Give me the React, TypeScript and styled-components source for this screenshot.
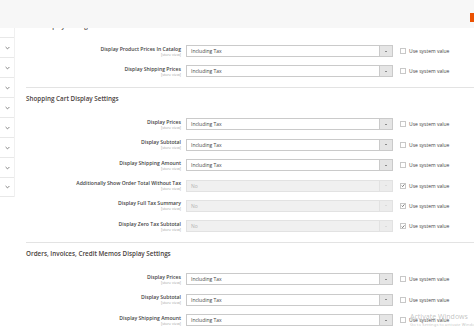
import React from "react";
import styled, { createGlobalStyle } from "styled-components";

type Row = {
  label: string;
  value: string;
  inherit?: boolean;
};

type Section = {
  title: string;
  rows: Row[];
};

const GlobalStyle = createGlobalStyle`
  html, body {
    margin: 0;
    padding: 0;
    background: #fff;
  }
  body {
    width: 474px;
    height: 333px;
    overflow: hidden;
    font-family: "Open Sans", "Liberation Sans", Arial, sans-serif;
    color: #303030;
  }
`;

const Page = styled.div`
  position: relative;
  width: 474px;
  height: 333px;
  overflow: hidden;
  display: flex;
`;

const TopBar = styled.div`
  position: absolute;
  top: 0;
  left: 0;
  right: 0;
  height: 28px;
  background: #f7f7f7;
  z-index: 2;
`;

const SaveButton = styled.div`
  position: absolute;
  top: 13px;
  right: 0;
  width: 4px;
  height: 9px;
  background: #eb5202;
`;

const Sidebar = styled.nav`
  width: 15px;
  flex: none;
  margin-top: 28px;
  padding-top: 9px;
  align-self: flex-start;
  border-right: 1px solid #f0f0f0;
  box-sizing: border-box;
`;

const NavItem = styled.div`
  height: 20px;
  border-top: 1px solid #e8e8e8;
  display: flex;
  align-items: center;
  justify-content: center;
  box-sizing: border-box;
  &:last-child {
    border-bottom: 1px solid #e8e8e8;
  }
`;

const Main = styled.main`
  flex: 1;
  padding: 21px 0 0 11px;
`;

const Block = styled.section<{ $first?: boolean }>`
  border-top: ${(p) => (p.$first ? "none" : "1px solid #e3e3e3")};
  padding-top: ${(p) => (p.$first ? "0" : "6px")};
  margin-bottom: 10px;
`;

const Heading = styled.h3`
  margin: 0 0 14px;
  height: 10px;
  line-height: 10px;
  font-size: 6.3px;
  font-weight: 600;
  color: #4a4240;
  white-space: nowrap;
`;

const Rows = styled.div`
  display: flex;
  flex-direction: column;
  gap: 8.4px;
`;

const FieldRow = styled.div`
  display: flex;
  align-items: center;
  height: 12px;
`;

const LabelBox = styled.div`
  width: 155px;
  flex: none;
  text-align: right;
  margin-right: 5px;
  display: flex;
  flex-direction: column;
  align-items: flex-end;
`;

const LabelText = styled.span`
  font-size: 5.1px;
  font-weight: 600;
  line-height: 7px;
  color: #444;
  white-space: nowrap;
`;

const Scope = styled.span`
  font-size: 3.7px;
  line-height: 4px;
  color: #a3a3a3;
  white-space: nowrap;
`;

const Select = styled.div<{ $disabled?: boolean }>`
  width: 207px;
  height: 12px;
  flex: none;
  box-sizing: border-box;
  display: flex;
  align-items: stretch;
  border: 1px solid ${(p) => (p.$disabled ? "#e2e2e2" : "#cacaca")};
  background: ${(p) => (p.$disabled ? "#f0f0f0" : "#fff")};
`;

const SelectValue = styled.span<{ $disabled?: boolean }>`
  flex: 1;
  padding-left: 4px;
  font-size: 5px;
  line-height: 10px;
  color: ${(p) => (p.$disabled ? "#b5b5b5" : "#444")};
`;

const Arrow = styled.span<{ $disabled?: boolean }>`
  width: 12px;
  flex: none;
  display: flex;
  align-items: center;
  justify-content: center;
  background: ${(p) => (p.$disabled ? "#ececec" : "#e5e5e5")};
  border-left: 1px solid ${(p) => (p.$disabled ? "#e2e2e2" : "#cacaca")};
  &::after {
    content: "";
    border-left: 1.3px solid transparent;
    border-right: 1.3px solid transparent;
    border-top: 1.6px solid ${(p) => (p.$disabled ? "#c8c8c8" : "#333")};
  }
`;

const Inherit = styled.label`
  display: flex;
  align-items: center;
  margin-left: 7px;
  gap: 3px;
  font-size: 5px;
  color: #444;
  white-space: nowrap;
`;

const Box = styled.span`
  width: 6px;
  height: 6px;
  box-sizing: border-box;
  border: 1px solid #c8c8c8;
  background: #fff;
  display: flex;
  align-items: center;
  justify-content: center;
`;

const Watermark = styled.div`
  position: absolute;
  left: 410px;
  top: 312px;
  color: rgba(120, 120, 120, 0.45);
  font-family: "Noto Sans", "Open Sans", sans-serif;
  white-space: nowrap;
  z-index: 3;
`;

const WatermarkTitle = styled.div`
  font-size: 7px;
  line-height: 9px;
`;

const WatermarkSub = styled.div`
  font-size: 4.3px;
  line-height: 6px;
`;

const sections: Section[] = [
  {
    title: "Price Display Settings",
    rows: [
      { label: "Display Product Prices In Catalog", value: "Including Tax" },
      { label: "Display Shipping Prices", value: "Including Tax" },
    ],
  },
  {
    title: "Shopping Cart Display Settings",
    rows: [
      { label: "Display Prices", value: "Including Tax" },
      { label: "Display Subtotal", value: "Including Tax" },
      { label: "Display Shipping Amount", value: "Including Tax" },
      { label: "Additionally Show Order Total Without Tax", value: "No", inherit: true },
      { label: "Display Full Tax Summary", value: "No", inherit: true },
      { label: "Display Zero Tax Subtotal", value: "No", inherit: true },
    ],
  },
  {
    title: "Orders, Invoices, Credit Memos Display Settings",
    rows: [
      { label: "Display Prices", value: "Including Tax" },
      { label: "Display Subtotal", value: "Including Tax" },
      { label: "Display Shipping Amount", value: "Including Tax" },
    ],
  },
];

const Chevron = () => (
  <svg width="5" height="4" viewBox="0 0 5 4">
    <polyline points="0.6,1 2.5,2.9 4.4,1" fill="none" stroke="#666" strokeWidth="0.8" />
  </svg>
);

const Check = () => (
  <svg width="5" height="5" viewBox="0 0 5 5">
    <polyline points="0.8,2.6 2,3.8 4.3,1.1" fill="none" stroke="#333" strokeWidth="0.8" />
  </svg>
);

export default function App(): React.ReactElement {
  return (
    <Page>
      <GlobalStyle />
      <TopBar>
        <SaveButton />
      </TopBar>
      <Sidebar>
        {Array.from({ length: 8 }).map((_, i) => (
          <NavItem key={i}>
            <Chevron />
          </NavItem>
        ))}
      </Sidebar>
      <Main>
        {sections.map((section, si) => (
          <Block key={section.title} $first={si === 0}>
            <Heading>{section.title}</Heading>
            <Rows>
              {section.rows.map((row) => (
                <FieldRow key={row.label}>
                  <LabelBox>
                    <LabelText>{row.label}</LabelText>
                    <Scope>[store view]</Scope>
                  </LabelBox>
                  <Select $disabled={row.inherit}>
                    <SelectValue $disabled={row.inherit}>{row.value}</SelectValue>
                    <Arrow $disabled={row.inherit} />
                  </Select>
                  <Inherit>
                    <Box>{row.inherit && <Check />}</Box>
                    Use system value
                  </Inherit>
                </FieldRow>
              ))}
            </Rows>
          </Block>
        ))}
      </Main>
      <Watermark>
        <WatermarkTitle>Activate Windows</WatermarkTitle>
        <WatermarkSub>Go to Settings to activate Windows.</WatermarkSub>
      </Watermark>
    </Page>
  );
}
